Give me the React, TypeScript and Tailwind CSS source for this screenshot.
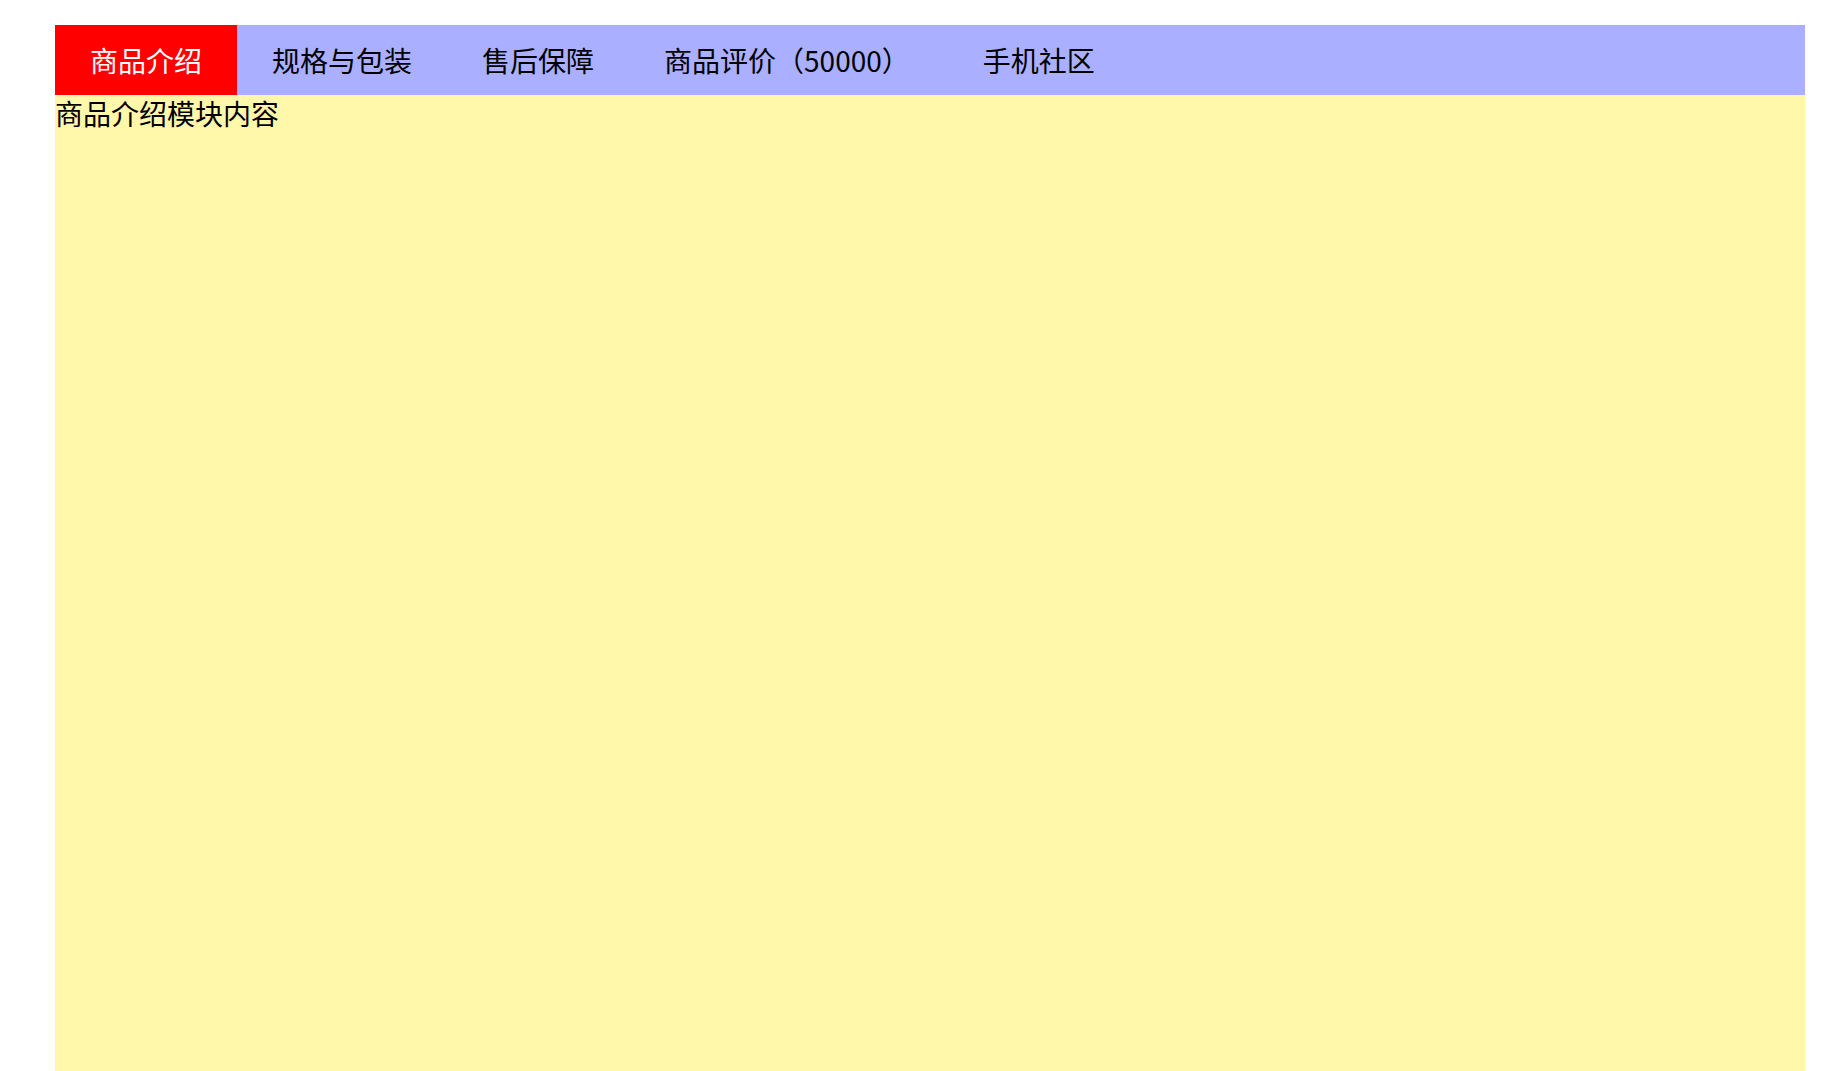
import { useState } from 'react';

const tabs = ['商品介绍', '规格与包装', '售后保障', '商品评价（50000）', '手机社区'];

export default function App() {
  const [active, setActive] = useState(0);

  return (
    <div
      className="ml-[55px] mt-[25px] w-[1750px] text-[28px] leading-[37px] text-black"
      style={{ fontFamily: '"Microsoft YaHei", "Noto Sans CJK SC", "Noto Sans", sans-serif' }}
    >
      {/* Tab bar */}
      <ul className="flex h-[70px] bg-[#aab0ff]">
        {tabs.map((tab, idx) => (
          <li
            key={idx}
            onClick={() => setActive(idx)}
            className={
              idx === active
                ? 'flex items-center px-[35px] cursor-pointer bg-[#ff0000] text-white'
                : idx === 3
                  ? 'flex items-center pl-[35px] pr-[38px] cursor-pointer'
                  : 'flex items-center px-[35px] cursor-pointer'
            }
          >
            {tab}
          </li>
        ))}
      </ul>

      {/* Content */}
      <div className="h-[1000px] bg-[#fff7aa]">
        <div>{tabs[active].replace(/（.*）/, '')}模块内容</div>
      </div>
    </div>
  );
}
